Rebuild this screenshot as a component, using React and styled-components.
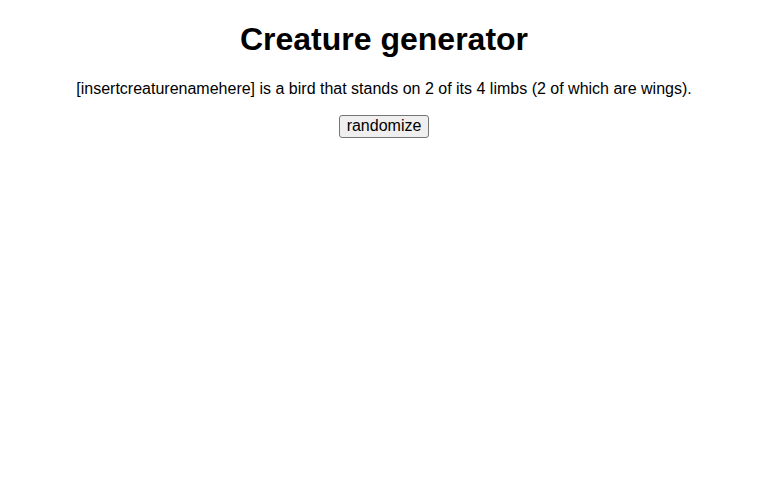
import React, { useState } from 'react';
import styled, { createGlobalStyle } from 'styled-components';

const GlobalStyle = createGlobalStyle`
  body {
    margin: 0;
    background: #fff;
    font-family: "Liberation Sans", Arial, sans-serif;
    color: #000;
  }
`;

const Page = styled.div`
  display: flex;
  flex-direction: column;
  align-items: center;
  text-align: center;
`;

const Title = styled.h1`
  font-size: 32px;
  font-weight: bold;
  margin: 21px 0 22px;
`;

const Sentence = styled.p`
  font-size: 16px;
  margin: 0 0 17px;
`;

const Button = styled.button`
  font-family: "Liberation Sans", Arial, sans-serif;
  font-size: 16px;
  padding: 1px 7px 2px;
  background: #efefef;
  border: 1px solid #767676;
  border-radius: 3px;
  color: #000;
`;

const bodies = [
  'a bird that stands on 2 of its 4 limbs (2 of which are wings)',
  'a lizard that stands on 4 of its 4 limbs',
  'a fish that has 2 fins and no limbs',
];

export default function App() {
  const [i, setI] = useState(0);
  return (
    <Page>
      <GlobalStyle />
      <Title>Creature generator</Title>
      <Sentence>[insertcreaturenamehere] is {bodies[i]}.</Sentence>
      <div>
        <Button onClick={() => setI((i + 1) % bodies.length)}>randomize</Button>
      </div>
    </Page>
  );
}
